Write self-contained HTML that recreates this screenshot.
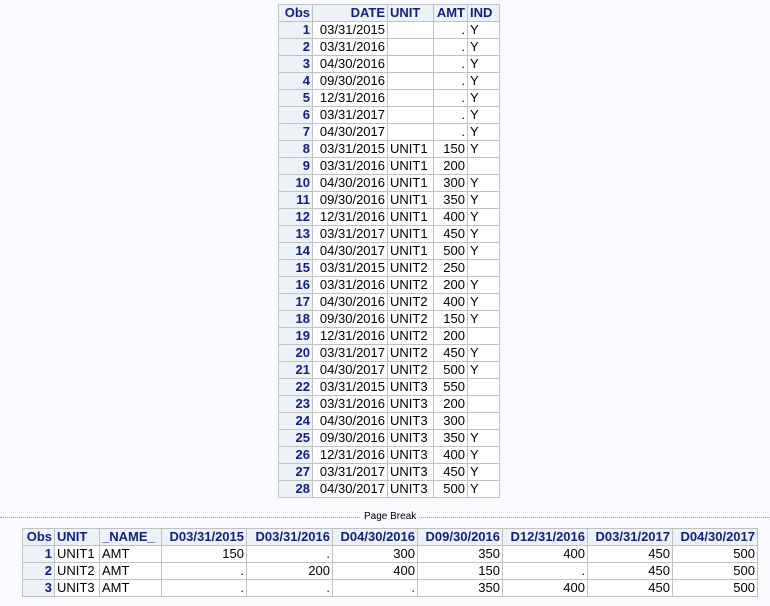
<!DOCTYPE html>
<html><head><style>
body{margin:0;background:#fafbfe;width:770px;height:606px;position:relative;overflow:hidden;font-family:"Liberation Sans",Arial,sans-serif;font-size:13px;color:#000}
table{border-collapse:collapse;table-layout:fixed;position:absolute;border:1px solid #c1c1c1}
td,th{border:1px solid #c1c1c1;height:16px;padding:0 2px;line-height:16px;white-space:nowrap;overflow:hidden}
th{background:#edf2f9;color:#112277;font-weight:bold;text-align:right}
th.l{text-align:left}
td{text-align:left;background:#fff}
td.r{text-align:right}
#pb{position:absolute;left:0;top:517px;width:770px;border-top:1px dotted #a0a0a0}
#pbl{position:absolute;left:361px;top:511px;font-size:10px;background:#fafbfe;padding:0 3px;color:#000}
</style></head><body>
<table style="left:278px;top:4px;width:221px">
<col style="width:34px"><col style="width:75px"><col style="width:46px"><col style="width:34px"><col style="width:32px">
<tr><th>Obs</th><th>DATE</th><th class="l">UNIT</th><th>AMT</th><th class="l">IND</th></tr>
<tr><th>1</th><td class="r">03/31/2015</td><td></td><td class="r">.</td><td>Y</td></tr>
<tr><th>2</th><td class="r">03/31/2016</td><td></td><td class="r">.</td><td>Y</td></tr>
<tr><th>3</th><td class="r">04/30/2016</td><td></td><td class="r">.</td><td>Y</td></tr>
<tr><th>4</th><td class="r">09/30/2016</td><td></td><td class="r">.</td><td>Y</td></tr>
<tr><th>5</th><td class="r">12/31/2016</td><td></td><td class="r">.</td><td>Y</td></tr>
<tr><th>6</th><td class="r">03/31/2017</td><td></td><td class="r">.</td><td>Y</td></tr>
<tr><th>7</th><td class="r">04/30/2017</td><td></td><td class="r">.</td><td>Y</td></tr>
<tr><th>8</th><td class="r">03/31/2015</td><td>UNIT1</td><td class="r">150</td><td>Y</td></tr>
<tr><th>9</th><td class="r">03/31/2016</td><td>UNIT1</td><td class="r">200</td><td></td></tr>
<tr><th>10</th><td class="r">04/30/2016</td><td>UNIT1</td><td class="r">300</td><td>Y</td></tr>
<tr><th>11</th><td class="r">09/30/2016</td><td>UNIT1</td><td class="r">350</td><td>Y</td></tr>
<tr><th>12</th><td class="r">12/31/2016</td><td>UNIT1</td><td class="r">400</td><td>Y</td></tr>
<tr><th>13</th><td class="r">03/31/2017</td><td>UNIT1</td><td class="r">450</td><td>Y</td></tr>
<tr><th>14</th><td class="r">04/30/2017</td><td>UNIT1</td><td class="r">500</td><td>Y</td></tr>
<tr><th>15</th><td class="r">03/31/2015</td><td>UNIT2</td><td class="r">250</td><td></td></tr>
<tr><th>16</th><td class="r">03/31/2016</td><td>UNIT2</td><td class="r">200</td><td>Y</td></tr>
<tr><th>17</th><td class="r">04/30/2016</td><td>UNIT2</td><td class="r">400</td><td>Y</td></tr>
<tr><th>18</th><td class="r">09/30/2016</td><td>UNIT2</td><td class="r">150</td><td>Y</td></tr>
<tr><th>19</th><td class="r">12/31/2016</td><td>UNIT2</td><td class="r">200</td><td></td></tr>
<tr><th>20</th><td class="r">03/31/2017</td><td>UNIT2</td><td class="r">450</td><td>Y</td></tr>
<tr><th>21</th><td class="r">04/30/2017</td><td>UNIT2</td><td class="r">500</td><td>Y</td></tr>
<tr><th>22</th><td class="r">03/31/2015</td><td>UNIT3</td><td class="r">550</td><td></td></tr>
<tr><th>23</th><td class="r">03/31/2016</td><td>UNIT3</td><td class="r">200</td><td></td></tr>
<tr><th>24</th><td class="r">04/30/2016</td><td>UNIT3</td><td class="r">300</td><td></td></tr>
<tr><th>25</th><td class="r">09/30/2016</td><td>UNIT3</td><td class="r">350</td><td>Y</td></tr>
<tr><th>26</th><td class="r">12/31/2016</td><td>UNIT3</td><td class="r">400</td><td>Y</td></tr>
<tr><th>27</th><td class="r">03/31/2017</td><td>UNIT3</td><td class="r">450</td><td>Y</td></tr>
<tr><th>28</th><td class="r">04/30/2017</td><td>UNIT3</td><td class="r">500</td><td>Y</td></tr>
</table>
<div id="pb"></div><div id="pbl">Page Break</div>
<table style="left:22px;top:528px;width:735px">
<col style="width:32px"><col style="width:45px"><col style="width:62px"><col style="width:85px"><col style="width:86px"><col style="width:85px"><col style="width:85px"><col style="width:85px"><col style="width:85px"><col style="width:85px">
<tr><th>Obs</th><th class="l">UNIT</th><th class="l">_NAME_</th><th>D03/31/2015</th><th>D03/31/2016</th><th>D04/30/2016</th><th>D09/30/2016</th><th>D12/31/2016</th><th>D03/31/2017</th><th>D04/30/2017</th></tr>
<tr><th>1</th><td>UNIT1</td><td>AMT</td><td class="r">150</td><td class="r">.</td><td class="r">300</td><td class="r">350</td><td class="r">400</td><td class="r">450</td><td class="r">500</td></tr>
<tr><th>2</th><td>UNIT2</td><td>AMT</td><td class="r">.</td><td class="r">200</td><td class="r">400</td><td class="r">150</td><td class="r">.</td><td class="r">450</td><td class="r">500</td></tr>
<tr><th>3</th><td>UNIT3</td><td>AMT</td><td class="r">.</td><td class="r">.</td><td class="r">.</td><td class="r">350</td><td class="r">400</td><td class="r">450</td><td class="r">500</td></tr>
</table>
</body></html>
